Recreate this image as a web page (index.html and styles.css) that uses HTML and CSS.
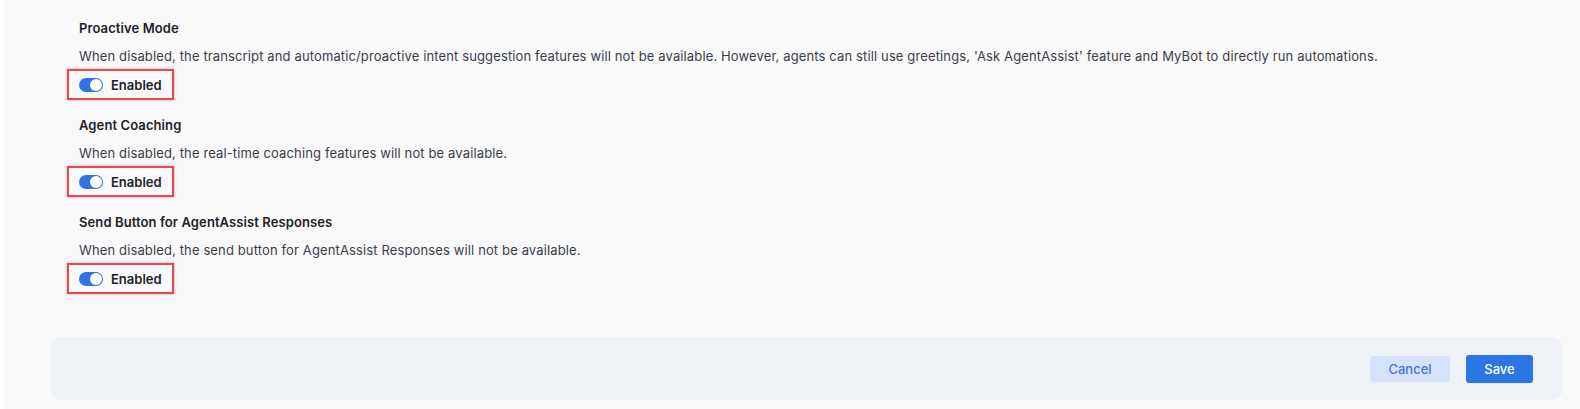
FILE: index.html
```html
<!DOCTYPE html>
<html>
<head>
<meta charset="utf-8">
<link rel="stylesheet" href="styles.css">
</head>
<body>
<div class="page">
  <div class="settings">
    <section class="setting">
      <h3 class="title">Proactive Mode</h3>
      <p class="desc">When disabled, the transcript and automatic/proactive intent suggestion features will not be available. However, agents can still use greetings, 'Ask AgentAssist' feature and MyBot to directly run automations.</p>
      <div class="toggle-wrap"><span class="switch"><span class="knob"></span></span><span class="label">Enabled</span></div>
    </section>
    <section class="setting">
      <h3 class="title">Agent Coaching</h3>
      <p class="desc">When disabled, the real-time coaching features will not be available.</p>
      <div class="toggle-wrap"><span class="switch"><span class="knob"></span></span><span class="label">Enabled</span></div>
    </section>
    <section class="setting">
      <h3 class="title">Send Button for AgentAssist Responses</h3>
      <p class="desc">When disabled, the send button for AgentAssist Responses will not be available.</p>
      <div class="toggle-wrap"><span class="switch"><span class="knob"></span></span><span class="label">Enabled</span></div>
    </section>
  </div>
  <div class="footer">
    <button class="btn cancel">Cancel</button>
    <button class="btn save">Save</button>
  </div>
</div>
</body>
</html>
```
FILE: styles.css
```css
* { box-sizing: border-box; }
html, body { margin: 0; padding: 0; background: #ffffff; overflow: hidden; }
body { font-family: Inter, "Noto Sans", sans-serif; }
.page {
  margin-left: 4px;
  width: 1576px;
  height: 409px;
  background: #f9f9f9;
  padding: 19px 18px 0 47px;
}
.settings { padding-left: 28px; }
.setting { height: 97px; }
.title {
  margin: 0;
  font-size: 13px;
  font-weight: 600;
  color: #1f2129;
  line-height: 18px;
  letter-spacing: 0.1px;
}
.desc {
  margin: 10px 0 0;
  font-size: 13px;
  color: #3a3d4a;
  line-height: 18px;
  letter-spacing: 0.13px;
}
.toggle-wrap {
  display: inline-flex;
  align-items: center;
  gap: 8px;
  margin: 4px 0 0 -12px;
  height: 31px;
  padding: 0 10px 0 10px;
  border: 2px solid #ea474d;
  box-shadow: 0 0 3px rgba(0,0,0,0.3);
}
.switch {
  width: 24px;
  height: 14px;
  border-radius: 7px;
  background: #2f74e0;
  display: flex;
  align-items: center;
  justify-content: flex-end;
  padding: 0 1px;
}
.knob {
  width: 12px;
  height: 12px;
  border-radius: 50%;
  background: #ffffff;
}
.label {
  font-size: 13px;
  font-weight: 600;
  color: #1f2129;
}
.footer {
  margin-top: 27px;
  height: 63px;
  background: #eef1f6;
  border-radius: 10px;
  display: flex;
  justify-content: flex-end;
  align-items: center;
  gap: 16px;
  padding-right: 29px;
}
.btn {
  font-family: Inter, "Noto Sans", sans-serif;
  font-size: 13px;
  border: none;
  border-radius: 3px;
  margin: 0;
  cursor: pointer;
}
.cancel {
  width: 80px;
  height: 26px;
  background: #d4e3fa;
  color: #4a74d4;
  font-weight: 500;
}
.save {
  width: 67px;
  height: 28px;
  background: #2b75e4;
  color: #ffffff;
  font-weight: 500;
}
```
